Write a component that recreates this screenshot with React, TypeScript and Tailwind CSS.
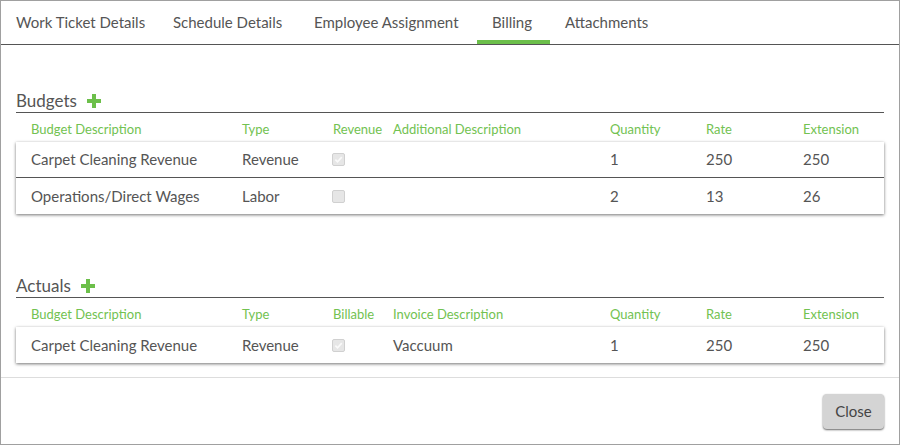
import React from "react";

const TABS = [
  { label: "Work Ticket Details", w: "w-[157px]" },
  { label: "Schedule Details", w: "w-[141px]" },
  { label: "Employee Assignment", w: "w-[178px]" },
  { label: "Billing", w: "w-[73px]" },
  { label: "Attachments", w: "w-[115px]" },
];

const COLS = "grid grid-cols-[211px_91px_60px_217px_96px_97px_1fr] pl-[15px]";

type Row = {
  desc: string;
  type: string;
  checked: boolean;
  extra: string;
  qty: string;
  rate: string;
  ext: string;
};

const BUDGETS: Row[] = [
  { desc: "Carpet Cleaning Revenue", type: "Revenue", checked: true, extra: "", qty: "1", rate: "250", ext: "250" },
  { desc: "Operations/Direct Wages", type: "Labor", checked: false, extra: "", qty: "2", rate: "13", ext: "26" },
];

const ACTUALS: Row[] = [
  { desc: "Carpet Cleaning Revenue", type: "Revenue", checked: true, extra: "Vaccuum", qty: "1", rate: "250", ext: "250" },
];

function Plus() {
  return (
    <svg width="14" height="14" viewBox="0 0 14 14" className="ml-[10px] mt-[1px]">
      <path d="M5 0h4v5h5v4H9v5H5V9H0V5h5z" fill="#6cbf4a" />
    </svg>
  );
}

function Check({ checked }: { checked: boolean }) {
  return (
    <span className="w-[13px] h-[13px] -ml-[1px] rounded-[2px] border border-[#d0d0d0] bg-[#e6e6e6] flex items-center justify-center">
      {checked && (
        <svg width="9" height="9" viewBox="0 0 10 10">
          <path d="M1.5 5.2l2.4 2.4L8.6 2.4" stroke="#fafafa" strokeWidth="1.8" fill="none" />
        </svg>
      )}
    </span>
  );
}

function Section({ title, flagLabel, extraLabel, rows }: { title: string; flagLabel: string; extraLabel: string; rows: Row[] }) {
  return (
    <div>
      <div className="flex items-center h-[24px] border-b border-[#555] text-[17px] text-[#555]">
        {title}
        <Plus />
      </div>
      <div className={`${COLS} h-[29px] items-center pt-[5px] text-[13px] text-[#72c251]`}>
        <span>Budget Description</span>
        <span>Type</span>
        <span>{flagLabel}</span>
        <span>{extraLabel}</span>
        <span>Quantity</span>
        <span>Rate</span>
        <span>Extension</span>
      </div>
      <div className="shadow-[0_1px_3px_rgba(0,0,0,0.55)]">
        {rows.map((r, i) => (
          <div
            key={i}
            className={`${COLS} h-[36px] items-center text-[15px] text-[#555] bg-white ${i < rows.length - 1 ? "border-b border-[#555]" : ""}`}
          >
            <span>{r.desc}</span>
            <span>{r.type}</span>
            <span><Check checked={r.checked} /></span>
            <span>{r.extra}</span>
            <span>{r.qty}</span>
            <span>{r.rate}</span>
            <span>{r.ext}</span>
          </div>
        ))}
      </div>
    </div>
  );
}

export default function App() {
  return (
    <div className="w-[900px] h-[445px] border border-[#a0a0a0] bg-white flex flex-col font-['Lato',sans-serif]">
      {/* Tabs */}
      <div className="flex h-[44px] border-b border-[#555]">
        {TABS.map((t) => (
          <div
            key={t.label}
            className={`${t.w} px-[15px] flex items-center text-[15px] text-[#555] border-b-4 ${
              t.label === "Billing" ? "border-[#6cbf4a]" : "border-transparent"
            }`}
          >
            <span className="mt-[4px] whitespace-nowrap">{t.label}</span>
          </div>
        ))}
      </div>

      <div className="flex-1 px-[15px] pt-[44px]">
        <Section title="Budgets" flagLabel="Revenue" extraLabel="Additional Description" rows={BUDGETS} />
        <div className="h-[60px]" />
        <Section title="Actuals" flagLabel="Billable" extraLabel="Invoice Description" rows={ACTUALS} />
      </div>

      <div className="h-[67px] border-t border-[#ddd] flex items-center justify-end px-[15px]">
        <button className="h-[35px] w-[61px] rounded-[4px] bg-[#d4d4d4] text-[15px] text-[#444] shadow-[0_1px_2px_rgba(0,0,0,0.6)]">
          Close
        </button>
      </div>
    </div>
  );
}
